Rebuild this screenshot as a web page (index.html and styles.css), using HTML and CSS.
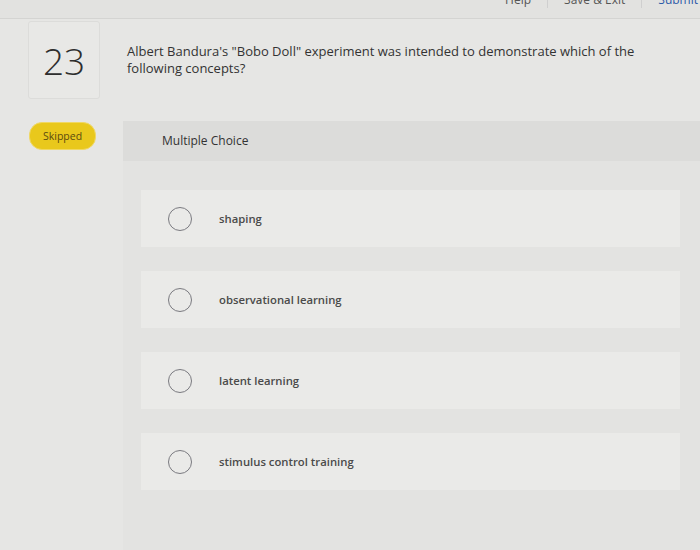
FILE: index.html
```html
<!DOCTYPE html>
<html lang="en">
<head>
    <meta charset="UTF-8">
    <meta name="viewport" content="width=device-width, initial-scale=1.0">
    <title>Question 23</title>
    <link rel="stylesheet" href="styles.css">
</head>
<body>
    <header class="topbar">
        <nav class="top-links">
            <span>Help</span>
            <span class="sep">Save &amp; Exit</span>
            <span class="sep submit">Submit</span>
        </nav>
    </header>
    <div class="question">
        <div class="q-number">23</div>
        <p class="q-text">Albert Bandura's "Bobo Doll" experiment was intended to demonstrate which of the following concepts?</p>
    </div>
    <div class="answer-area">
        <div class="status-col">
            <span class="badge">Skipped</span>
        </div>
        <div class="panel">
            <div class="panel-head">Multiple Choice</div>
            <div class="options">
                <label class="option"><span class="radio"></span>shaping</label>
                <label class="option"><span class="radio"></span>observational learning</label>
                <label class="option"><span class="radio"></span>latent learning</label>
                <label class="option"><span class="radio"></span>stimulus control training</label>
            </div>
        </div>
    </div>
</body>
</html>
```

FILE: styles.css
```css
body {
    font-family: "Open Sans", "Liberation Sans", Arial, sans-serif;
    background-color: #e6e6e4;
    color: #3a3a3a;
    margin: 0;
    padding: 0;
    height: 550px;
    overflow: hidden;
}
.topbar {
    height: 18px;
    border-bottom: 1px solid #d4d4d2;
    background-color: #e2e2e0;
    overflow: hidden;
}
.top-links {
    display: flex;
    justify-content: flex-end;
    margin-top: -9px;
    margin-right: -14px;
    font-size: 12px;
    color: #555;
}
.top-links span {
    padding: 0 16px;
}
.top-links .sep {
    border-left: 1px solid #cfcfcf;
}
.top-links .submit {
    color: #2d5aa8;
}
.question {
    display: flex;
    align-items: flex-start;
    padding: 2px 0 0 28px;
}
.q-number {
    width: 72px;
    height: 78px;
    border: 1px solid #dcdcda;
    border-radius: 3px;
    background-color: #e8e8e6;
    font-size: 37px;
    font-weight: 300;
    color: #2e2e2e;
    display: flex;
    align-items: center;
    justify-content: center;
    box-sizing: border-box;
}
.q-text {
    margin: 22px 0 0 27px;
    width: 515px;
    font-size: 13px;
    line-height: 17px;
    color: #333;
}
.answer-area {
    display: flex;
    margin-top: 22px;
}
.status-col {
    width: 123px;
    padding: 1px 0 0 29px;
    box-sizing: border-box;
}
.badge {
    display: inline-block;
    background-color: #e9c81c;
    color: #5a4a10;
    font-size: 10.5px;
    padding: 6px 13px;
    border-radius: 13px;
    border: 1px solid #f0d864;
}
.panel {
    flex: 1;
    background-color: #e3e3e1;
    height: 430px;
}
.panel-head {
    background-color: #dcdcda;
    height: 40px;
    padding: 11px 0 0 39px;
    font-size: 12px;
    color: #333;
    box-sizing: border-box;
}
.options {
    display: flex;
    flex-direction: column;
    gap: 24px;
    padding: 29px 20px 0 18px;
}
.option {
    display: flex;
    align-items: center;
    height: 57px;
    background-color: #eaeae8;
    padding-left: 27px;
    font-size: 11.3px;
    font-weight: 600;
    color: #4a4a4a;
}
.radio {
    width: 24px;
    height: 24px;
    border: 1.5px solid #7a7a80;
    border-radius: 50%;
    box-sizing: border-box;
    margin-right: 27px;
}
```
